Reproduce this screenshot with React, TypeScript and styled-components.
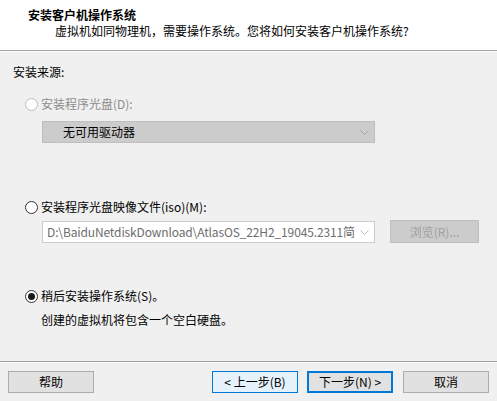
import React from "react";
import styled, { createGlobalStyle, css } from "styled-components";

const Global = createGlobalStyle`
  html, body { margin: 0; padding: 0; background: #f0f0f0; }
  body { font-family: "Noto Sans CJK SC", "Noto Sans", sans-serif; font-size: 12px; color: #000; }
`;

const Window = styled.div`
  width: 497px;
  height: 401px;
  display: flex;
  flex-direction: column;
  background: #f0f0f0;
  overflow: hidden;
`;

const Header = styled.div`
  height: 51px;
  box-sizing: border-box;
  background: #fff;
  padding-top: 7px;
  border-bottom: 1px solid #a0a0a0;
  box-shadow: 0 1px 0 #ffffff;
  display: flex;
  flex-direction: column;
`;

const Title = styled.div`
  padding-left: 28px;
  font-weight: bold;
  line-height: 16px;
  font-size: 12px;
`;

const Subtitle = styled.div`
  padding-left: 55px;
  line-height: 16px;
  font-size: 12px;
`;

const Content = styled.div`
  flex: 1;
  display: flex;
  flex-direction: column;
  padding: 13px 0 0 13px;
`;

const SectionLabel = styled.div`
  line-height: 16px;
`;

const RadioRow = styled.div<{ $top: number; $disabled?: boolean }>`
  display: flex;
  align-items: center;
  gap: 3px;
  margin-top: ${(p) => p.$top}px;
  margin-left: 12px;
  height: 16px;
  line-height: 16px;
  color: ${(p) => (p.$disabled ? "#8d8d8d" : "#000")};
`;

const RadioCircle = styled.span<{ $checked?: boolean; $disabled?: boolean }>`
  width: 13px;
  height: 13px;
  box-sizing: border-box;
  border-radius: 50%;
  border: 1px solid ${(p) => (p.$disabled ? "#bcbcbc" : "#333")};
  background: #fff;
  position: relative;
  flex: none;
  ${(p) =>
    p.$checked &&
    css`
      &::after {
        content: "";
        position: absolute;
        left: 2px;
        top: 2px;
        width: 7px;
        height: 7px;
        border-radius: 50%;
        background: #1a1a1a;
      }
    `}
`;

const FieldRow = styled.div<{ $top: number }>`
  display: flex;
  align-items: center;
  gap: 15px;
  margin-top: ${(p) => p.$top}px;
  margin-left: 29px;
`;

const Combo = styled.div<{ $disabledBox?: boolean }>`
  width: 333px;
  height: 22px;
  box-sizing: border-box;
  border: 1px solid ${(p) => (p.$disabledBox ? "#bfbfbf" : "#cccccc")};
  background: ${(p) => (p.$disabledBox ? "#cccccc" : "#ffffff")};
  display: flex;
  align-items: center;
  position: relative;
`;

const ComboText = styled.span<{ $indent: number; $color: string; $tight?: boolean }>`
  padding-left: ${(p) => p.$indent}px;
  color: ${(p) => p.$color};
  white-space: nowrap;
  line-height: 16px;
  letter-spacing: ${(p) => (p.$tight ? "-0.13px" : "normal")};
`;

const Chevron = styled.svg`
  position: absolute;
  right: 5px;
  top: 8px;
`;

const BrowseButton = styled.div`
  width: 89px;
  height: 23px;
  box-sizing: border-box;
  border: 1px solid #bfbfbf;
  background: #cccccc;
  color: #a0a0a0;
  display: flex;
  align-items: center;
  justify-content: center;
`;

const Description = styled.div`
  margin-top: 8px;
  margin-left: 28px;
  line-height: 16px;
`;

const Footer = styled.div`
  height: 40px;
  box-sizing: border-box;
  border-top: 1px solid #a0a0a0;
  box-shadow: inset 0 1px 0 #ffffff;
  display: flex;
  align-items: flex-start;
  padding: 9px 8px 0 8px;
`;

const Spacer = styled.div`
  flex: 1;
`;

type Variant = "normal" | "hover" | "default";

const Button = styled.div<{ $variant: Variant; $gap?: number }>`
  width: 86px;
  height: 22px;
  box-sizing: border-box;
  margin-left: ${(p) => p.$gap ?? 0}px;
  display: flex;
  align-items: center;
  justify-content: center;
  line-height: 16px;
  ${(p) =>
    p.$variant === "normal" &&
    css`
      background: #e1e1e1;
      border: 1px solid #adadad;
    `}
  ${(p) =>
    p.$variant === "hover" &&
    css`
      background: #e5f1fb;
      border: 1px solid #0078d7;
    `}
  ${(p) =>
    p.$variant === "default" &&
    css`
      background: #e1e1e1;
      border: 2px solid #0078d7;
    `}
`;

const ChevronIcon = ({ color }: { color: string }) => (
  <Chevron width="9" height="5" viewBox="0 0 9 5">
    <path d="M0.5 0.5 L4.5 4.5 L8.5 0.5" fill="none" stroke={color} strokeWidth="1" />
  </Chevron>
);

export default function App() {
  return (
    <>
      <Global />
      <Window>
        <Header>
          <Title>安装客户机操作系统</Title>
          <Subtitle>虚拟机如同物理机，需要操作系统。您将如何安装客户机操作系统?</Subtitle>
        </Header>
        <Content>
          <SectionLabel>安装来源:</SectionLabel>
          <RadioRow $top={16} $disabled>
            <RadioCircle $disabled />
            安装程序光盘(D):
          </RadioRow>
          <FieldRow $top={9}>
            <Combo $disabledBox>
              <ComboText $indent={20} $color="#000">
                无可用驱动器
              </ComboText>
              <ChevronIcon color="#a0a0a0" />
            </Combo>
          </FieldRow>
          <RadioRow $top={56}>
            <RadioCircle />
            安装程序光盘映像文件(iso)(M):
          </RadioRow>
          <FieldRow $top={5}>
            <Combo>
              <ComboText $indent={4} $color="#6d6d6d" $tight>
                D:\BaiduNetdiskDownload\AtlasOS_22H2_19045.2311简
              </ComboText>
              <ChevronIcon color="#bdbdbd" />
            </Combo>
            <BrowseButton>浏览(R)...</BrowseButton>
          </FieldRow>
          <RadioRow $top={45}>
            <RadioCircle $checked />
            稍后安装操作系统(S)。
          </RadioRow>
          <Description>创建的虚拟机将包含一个空白硬盘。</Description>
        </Content>
        <Footer>
          <Button $variant="normal">帮助</Button>
          <Spacer />
          <Button $variant="hover">&lt; 上一步(B)</Button>
          <Button $variant="default" $gap={9}>
            下一步(N) &gt;
          </Button>
          <Button $variant="normal" $gap={10}>
            取消
          </Button>
        </Footer>
      </Window>
    </>
  );
}
